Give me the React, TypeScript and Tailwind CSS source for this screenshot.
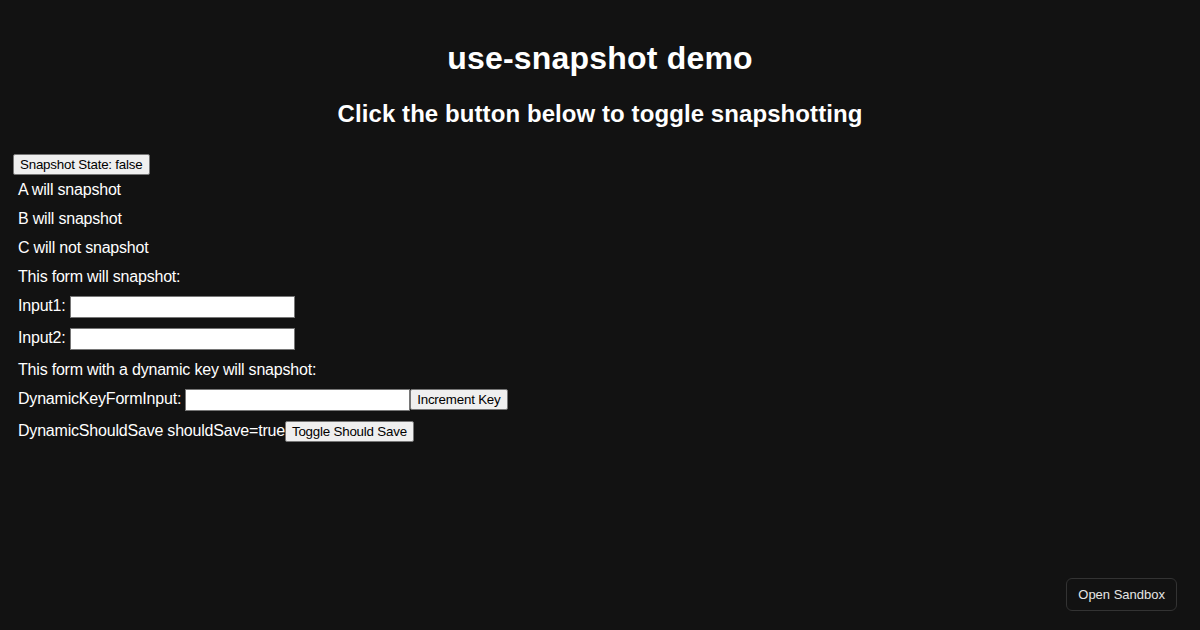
import React, { useState } from 'react';

const btn =
  'bg-[#efefef] text-black text-[13.33px] leading-[15px] tracking-[-0.2px] px-[6px] py-[2px] border border-[#767676] rounded-[2px] h-[21px] whitespace-nowrap';
const input = 'bg-white border border-[#767676] w-[225px] h-[22px] px-[2px] text-[13.33px] text-black';

export default function App() {
  const [snapshot, setSnapshot] = useState(false);
  const [shouldSave, setShouldSave] = useState(true);
  const [, setKey] = useState(0);

  return (
    <div
      className="min-h-screen bg-[#121212] text-white text-[16px] tracking-[-0.2px] px-[13px] pt-[40px]"
      style={{ fontFamily: '"Liberation Sans", Arial, sans-serif' }}
    >
      <h1 className="text-[32px] font-bold text-center leading-[37px] tracking-[0.2px]">use-snapshot demo</h1>
      <h2 className="text-[24px] font-bold text-center leading-[28px] tracking-[0.08px] mt-[23px]">
        Click the button below to toggle snapshotting
      </h2>

      <div className="mt-[26px] flex flex-col items-start">
        <button className={btn} onClick={() => setSnapshot(!snapshot)}>
          Snapshot State: {String(snapshot)}
        </button>

        <div className="py-[5px] pl-[5px] leading-[19px]">A will snapshot</div>
        <div className="py-[5px] pl-[5px] leading-[19px]">B will snapshot</div>
        <div className="py-[5px] pl-[5px] leading-[19px]">C will not snapshot</div>
        <div className="py-[5px] pl-[5px] leading-[19px]">This form will snapshot:</div>

        <div className="py-[5px] pl-[5px] flex items-start gap-[4px]">
          <span className="leading-[19px]">Input1:</span>
          <input className={input} />
        </div>
        <div className="py-[5px] pl-[5px] flex items-start gap-[4px]">
          <span className="leading-[19px]">Input2:</span>
          <input className={input} />
        </div>

        <div className="py-[5px] pl-[5px] leading-[19px]">This form with a dynamic key will snapshot:</div>

        <div className="py-[5px] pl-[5px] flex items-start">
          <span className="leading-[19px] mr-[4px]">DynamicKeyFormInput:</span>
          <input className={input} />
          <button className={btn} onClick={() => setKey((k) => k + 1)}>
            Increment Key
          </button>
        </div>

        <div className="py-[5px] pl-[5px] flex items-start">
          <span className="leading-[19px]">DynamicShouldSave shouldSave={String(shouldSave)}</span>
          <button className={btn} onClick={() => setShouldSave(!shouldSave)}>
            Toggle Should Save
          </button>
        </div>
      </div>

      <button className="fixed right-[23px] bottom-[19px] bg-[#121212] border border-[#333333] rounded-[6px] px-[11px] py-2 text-[13px] leading-[15px] tracking-normal text-[#e5e5e5]">
        Open Sandbox
      </button>
    </div>
  );
}
